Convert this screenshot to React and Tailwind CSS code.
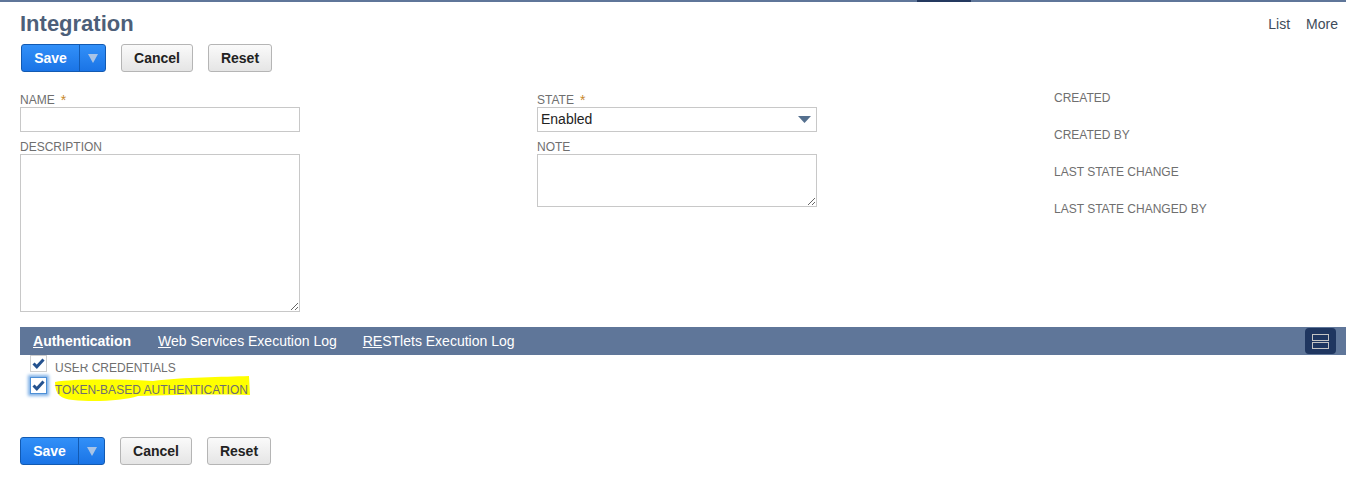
const SaveGroup = () => (
  <div className="flex items-center">
    <div className="flex h-[28px] w-[85px] rounded-[3px] border border-[#125ab2] bg-gradient-to-b from-[#3290f8] to-[#1a74e6] text-white">
      <div className="flex w-[58px] items-center justify-center border-r border-[#125ab2] text-[14px] font-bold">
        Save
      </div>
      <div className="flex flex-1 items-center justify-center">
        <svg width="10" height="9" viewBox="0 0 10 9">
          <path d="M0 0h10L5 9z" fill="#a9c4e6" />
        </svg>
      </div>
    </div>
    <button className="ml-[15px] h-[28px] w-[72px] rounded-[3px] border border-[#b5b5b5] bg-gradient-to-b from-[#fafafa] to-[#e5e5e5] text-[14px] font-bold text-[#222]">
      Cancel
    </button>
    <button className="ml-[15px] h-[28px] w-[64px] rounded-[3px] border border-[#b5b5b5] bg-gradient-to-b from-[#fafafa] to-[#e5e5e5] text-[14px] font-bold text-[#222]">
      Reset
    </button>
  </div>
);

const Label = ({ children, required }) => (
  <div className="flex h-[14px] items-center text-[12px] leading-[14px] text-[#6f6f6f]">
    {children}
    {required && (
      <span className="ml-[6px] text-[14px] text-[#c7892c]">*</span>
    )}
  </div>
);

const Tab = ({ first, rest, active }) => (
  <div
    className={`relative text-[14px] text-white ${active ? "font-bold" : ""}`}
  >
    <span className="underline">{first}</span>
    {rest}
    {active && (
      <div className="absolute bottom-[-12px] left-1/2 h-0 w-0 -translate-x-1/2 border-x-[7px] border-b-[5px] border-x-transparent border-b-white" />
    )}
  </div>
);

const Check = ({ focused }) => (
  <div
    className={`flex h-[17px] w-[17px] shrink-0 items-center justify-center border bg-white ${
      focused
        ? "border-[#4d8fd6] shadow-[0_0_3px_2px_#7fb0e6]"
        : "border-[#cfcfcf]"
    }`}
  >
    <svg width="13" height="11" viewBox="0 0 13 11">
      <path
        d="M1.5 5.5 L4.8 8.8 L11.5 1.5"
        fill="none"
        stroke="#24528f"
        strokeWidth="3"
      />
    </svg>
  </div>
);

export default function App() {
  return (
    <div className="h-[486px] w-[1346px] overflow-hidden bg-white font-['Liberation_Sans',Arial,sans-serif]">
      {/* top bar */}
      <div className="flex h-[2px] bg-[#5f7699] pl-[917px]">
        <div className="h-[2px] w-[54px] bg-[#24395f]" />
      </div>

      {/* title */}
      <div className="flex h-[42px] items-start justify-between pl-[20px] pr-[8px] pt-[9px]">
        <h1 className="text-[22px] font-bold leading-[26px] text-[#4d5f79]">
          Integration
        </h1>
        <div className="flex gap-[16px] pt-[5px] text-[14px] leading-[16px] text-[#404b5a]">
          <span>List</span>
          <span>More</span>
        </div>
      </div>

      <div className="pl-[21px]">
        <SaveGroup />
      </div>

      {/* main fields */}
      <div className="mt-[21px] grid h-[234px] grid-cols-[517px_517px_1fr] pl-[20px]">
        <div>
          <Label required>NAME</Label>
          <div className="h-[25px] w-[280px] border border-[#c8c8c8]" />
          <div className="mt-[8px]">
            <Label>DESCRIPTION</Label>
          </div>
          <textarea className="block h-[158px] w-[280px] border border-[#c8c8c8] outline-none" />
        </div>
        <div>
          <Label required>STATE</Label>
          <div className="flex h-[25px] w-[280px] items-center justify-between border border-[#c8c8c8] pl-[3px] pr-[5px] text-[14px] text-[#222]">
            Enabled
            <svg width="13" height="7" viewBox="0 0 13 7">
              <path d="M0 0h13L6.5 7z" fill="#55708f" />
            </svg>
          </div>
          <div className="mt-[8px]">
            <Label>NOTE</Label>
          </div>
          <textarea className="block h-[53px] w-[280px] border border-[#c8c8c8] outline-none" />
        </div>
        <div className="-mt-[2px] flex flex-col gap-[23px] text-[12px] leading-[14px] text-[#6f6f6f]">
          <div>CREATED</div>
          <div>CREATED BY</div>
          <div>LAST STATE CHANGE</div>
          <div>LAST STATE CHANGED BY</div>
        </div>
      </div>

      {/* tab bar */}
      <div className="ml-[20px] flex h-[28px] items-center justify-between bg-[#5f7699] pl-[13px] pr-[10px]">
        <div className="flex">
          <Tab first="A" rest="uthentication" active />
          <div className="ml-[27px]">
            <Tab first="W" rest="eb Services Execution Log" />
          </div>
          <div className="ml-[26px]">
            <Tab first="RE" rest="STlets Execution Log" />
          </div>
        </div>
        <div className="flex h-[26px] w-[31px] flex-col items-center justify-center gap-[1px] rounded-[4px] bg-[#1f3660]">
          <div className="h-[7px] w-[17px] border border-[#c4c4c4]" />
          <div className="h-[7px] w-[17px] border border-[#c4c4c4]" />
        </div>
      </div>

      {/* checkboxes */}
      <div className="pl-[30px]">
        <div className="flex h-[17px] items-center">
          <Check />
          <span className="ml-[8px] mt-[8px] text-[12px] text-[#6f6f6f]">
            USER CREDENTIALS
          </span>
        </div>
        <div className="flex h-[27px] items-center">
          <Check focused />
          <span className="relative ml-[8px] mt-[8px] text-[12px] text-[#6f6f6f]">
            <svg
              className="absolute left-[-2px] top-[-6px]"
              width="198"
              height="30"
              viewBox="0 0 198 30"
            >
              <path
                d="M2 7 C20 4 60 4 100 6 C130 2 170 2 196 1 L197 20 C150 19 120 20 85 21 C70 26 40 27 20 25 C8 24 2 20 2 7z"
                fill="#ffff00"
              />
            </svg>
            <span className="relative">TOKEN-BASED AUTHENTICATION</span>
          </span>
        </div>
      </div>

      <div className="mt-[38px] pl-[20px]">
        <SaveGroup />
      </div>
    </div>
  );
}
